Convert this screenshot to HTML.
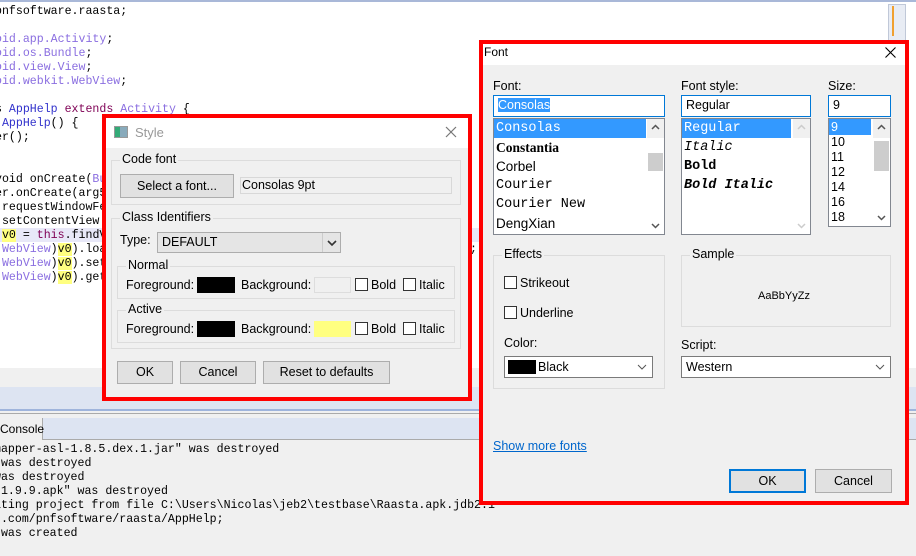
<!DOCTYPE html>
<html><head><meta charset="utf-8"><style>
*{box-sizing:border-box;margin:0;padding:0}
body{width:916px;height:556px;overflow:hidden;position:relative;background:#f0f0f0;font-family:"Liberation Sans",sans-serif;font-size:12px;color:#000}
.a{position:absolute}
.code{font-family:"Liberation Mono",monospace;font-size:11.6px;white-space:pre;line-height:14px}
.p{color:#8a6ee0}.k{color:#7f0055}.n{color:#3333cc}
.hl{background:#ffff80}
.grp{position:absolute;border:1px solid #dcdcdc}
.grp>.t{position:absolute;top:-9px;left:8px;background:#f0f0f0;padding:0 2px;font-size:12.5px}
.btn{position:absolute;background:#e1e1e1;border:1px solid #adadad;text-align:center;font-size:12.5px}
.cb{position:absolute;width:13px;height:13px;border:1px solid #333;background:#fff}
.sw{position:absolute;height:16px}
.lst{position:absolute;background:#fff;border:1px solid #828790;overflow:hidden}
.lst div{height:19px;line-height:19px;padding-left:2px;font-size:13.5px}
.sel{background:#3399ff;color:#fff}
.sb{position:absolute;top:0;right:0;width:17px;bottom:0;background:#f0f0f0}
.inp{position:absolute;background:#fff;border:1px solid #0078d7;font-size:12.5px;padding:2px 4px}
svg{position:absolute}
</style></head><body>
<div class="a" style="left:0;top:0;width:916px;height:368px;background:#fff;border-top:2px solid #a9b8d8"></div>
<div class="a" style="left:0;top:228px;width:900px;height:14px;background:#e8e8f8"></div>
<div class="a code" style="left:-5px;top:5px">pnfsoftware.raasta;

<span class="p">oid.app.Activity</span>;
<span class="p">oid.os.Bundle</span>;
<span class="p">oid.view.View</span>;
<span class="p">oid.webkit.WebView</span>;

s <span class="n">AppHelp</span> <span class="k">extends</span> <span class="p">Activity</span> {
 <span class="n">AppHelp</span>() {
er();


void onCreate(<span class="p">Bundle</span>
er.onCreate(arg5
 requestWindowFe
 setContentView
 <span class="hl">v0</span> = <span class="k">this</span>.findV
(<span class="p">WebView</span>)<span class="hl">v0</span>).loadD
(<span class="p">WebView</span>)<span class="hl">v0</span>).setBa
(<span class="p">WebView</span>)<span class="hl">v0</span>).getSe</div>
<div class="a code" style="left:470px;top:243px">;</div>
<div class="a" style="left:888px;top:4px;width:18px;height:380px;border:1px solid #c0c8d8;background:#e8ecf4"></div>
<div class="a" style="left:892px;top:6px;width:2px;height:30px;background:#f0a030"></div>
<div class="a" style="left:0;top:387px;width:916px;height:22px;background:#dde4f2"></div>
<div class="a" style="left:0;top:409px;width:916px;height:2px;background:#9fb4dc"></div>
<div class="a" style="left:0;top:413px;width:916px;height:1px;background:#aaa"></div>
<div class="a" style="left:0;top:418px;width:916px;height:22px;background:#dde4f2;border-bottom:1px solid #aaa"></div>
<div class="a" style="left:0;top:418px;width:43px;height:22px;background:#f0f0f0;border-right:1px solid #aaa;line-height:22px;font-size:12px">Console</div>
<div class="a code" style="left:-6px;top:443px">mapper-asl-1.8.5.dex.1.jar" was destroyed
 was destroyed
was destroyed
 1.9.9.apk" was destroyed
ating project from file C:\Users\Nicolas\jeb2\testbase\Raasta.apk.jdb2.1
 .com/pnfsoftware/raasta/AppHelp;
 was created</div>

<!-- Style dialog -->
<div class="a" style="left:102px;top:114px;width:370px;height:287px;border:4px solid #f00;background:#f0f0f0"></div>
<div class="a" style="left:106px;top:118px;width:362px;height:30px;background:#fff"></div>
<div class="a" style="left:114px;top:126px;width:14px;height:12px;border:1px solid #999;background:linear-gradient(90deg,#3a7 0 40%,#8ab 40%)"></div>
<div class="a" style="left:135px;top:125px;color:#999;font-size:13px">Style</div>
<svg style="left:445px;top:126px" width="12" height="12"><path d="M1 1L11 11M11 1L1 11" stroke="#777" stroke-width="1.2"/></svg>
<div class="grp" style="left:111px;top:160px;width:350px;height:45px"><span class="t">Code font</span></div>
<div class="btn" style="left:120px;top:174px;width:114px;height:24px;line-height:22px">Select a font...</div>
<div class="a" style="left:240px;top:177px;width:212px;height:17px;border:1px solid #d8d8d8;background:#f0f0f0;font-size:12.5px;padding-left:1px;line-height:15px">Consolas 9pt</div>
<div class="grp" style="left:111px;top:218px;width:350px;height:131px"><span class="t">Class Identifiers</span></div>
<div class="a" style="left:120px;top:233px;font-size:12.5px">Type:</div>
<div class="a" style="left:157px;top:232px;width:184px;height:21px;border:1px solid #adadad;background:#e5e5e5;padding:2px 4px;font-size:12.5px">DEFAULT</div>
<div class="a" style="left:322px;top:233px;width:1px;height:19px;background:#ccc"></div>
<svg style="left:327px;top:239px" width="10" height="8"><path d="M1 2L5 6L9 2" stroke="#333" stroke-width="1.6" fill="none"/></svg>
<div class="grp" style="left:117px;top:266px;width:338px;height:33px"><span class="t">Normal</span></div>
<div class="a" style="left:126px;top:278px;font-size:12.5px">Foreground:</div>
<div class="sw" style="left:197px;top:277px;width:38px;background:#000"></div>
<div class="a" style="left:241px;top:278px;font-size:12.5px">Background:</div>
<div class="sw" style="left:314px;top:277px;width:37px;background:#f0f0f0;border:1px solid #ddd"></div>
<div class="cb" style="left:355px;top:278px"></div><div class="a" style="left:371px;top:278px;font-size:12.5px">Bold</div>
<div class="cb" style="left:403px;top:278px"></div><div class="a" style="left:419px;top:278px;font-size:12.5px">Italic</div>
<div class="grp" style="left:117px;top:310px;width:338px;height:33px"><span class="t">Active</span></div>
<div class="a" style="left:126px;top:322px;font-size:12.5px">Foreground:</div>
<div class="sw" style="left:197px;top:321px;width:38px;background:#000"></div>
<div class="a" style="left:241px;top:322px;font-size:12.5px">Background:</div>
<div class="sw" style="left:314px;top:321px;width:37px;background:#ffff80"></div>
<div class="cb" style="left:355px;top:322px"></div><div class="a" style="left:371px;top:322px;font-size:12.5px">Bold</div>
<div class="cb" style="left:403px;top:322px"></div><div class="a" style="left:419px;top:322px;font-size:12.5px">Italic</div>
<div class="btn" style="left:117px;top:361px;width:56px;height:23px;line-height:21px">OK</div>
<div class="btn" style="left:180px;top:361px;width:76px;height:23px;line-height:21px">Cancel</div>
<div class="btn" style="left:263px;top:361px;width:127px;height:23px;line-height:21px">Reset to defaults</div>

<!-- Font dialog -->
<div class="a" style="left:479px;top:40px;width:430px;height:465px;border:4px solid #f00;background:#f0f0f0"></div>
<div class="a" style="left:483px;top:44px;width:422px;height:21px;background:#fff"></div>
<div class="a" style="left:484px;top:45px">Font</div>
<svg style="left:885px;top:47px" width="11" height="11"><path d="M0.5 0.5L10.5 10.5M10.5 0.5L0.5 10.5" stroke="#000" stroke-width="1.1"/></svg>
<div class="a" style="left:493px;top:79px;font-size:12.5px">Font:</div>
<div class="inp" style="left:493px;top:95px;width:172px;height:22px"><span style="background:#3399ff;color:#fff">Consolas</span></div>
<div class="lst" style="left:493px;top:118px;width:172px;height:117px">
<div class="sel" style="font-family:'Liberation Mono';width:152px">Consolas</div>
<div style="font-family:'Liberation Serif';font-weight:bold">Constantia</div>
<div>Corbel</div>
<div style="font-family:'Liberation Mono'">Courier</div>
<div style="font-family:'Liberation Mono'">Courier New</div>
<div>DengXian</div>
<div class="sb"><div style="position:absolute;top:34px;left:1px;width:15px;height:18px;background:#cdcdcd;padding:0"></div>
<svg style="left:4px;top:5px" width="9" height="6"><path d="M1 5L4.5 1.5L8 5" stroke="#555" stroke-width="1.5" fill="none"/></svg>
<svg style="left:4px;top:104px" width="9" height="6"><path d="M1 1L4.5 4.5L8 1" stroke="#555" stroke-width="1.5" fill="none"/></svg></div>
</div>
<div class="a" style="left:681px;top:79px;font-size:12.5px">Font style:</div>
<div class="inp" style="left:681px;top:95px;width:130px;height:22px">Regular</div>
<div class="lst" style="left:681px;top:118px;width:130px;height:117px">
<div class="sel" style="width:109px;font-family:'Liberation Mono'">Regular</div>
<div style="font-style:italic;font-family:'Liberation Mono'">Italic</div>
<div style="font-weight:bold;font-family:'Liberation Mono'">Bold</div>
<div style="font-weight:bold;font-style:italic;font-family:'Liberation Mono'">Bold Italic</div>
<div class="sb"><svg style="left:4px;top:5px" width="9" height="6"><path d="M1 5L4.5 1.5L8 5" stroke="#ccc" stroke-width="1.5" fill="none"/></svg>
<svg style="left:4px;top:104px" width="9" height="6"><path d="M1 1L4.5 4.5L8 1" stroke="#ccc" stroke-width="1.5" fill="none"/></svg></div>
</div>
<div class="a" style="left:828px;top:79px;font-size:12.5px">Size:</div>
<div class="inp" style="left:828px;top:95px;width:63px;height:22px">9</div>
<div class="lst" style="left:828px;top:118px;width:63px;height:109px">
<div class="sel" style="width:42px;height:16px;line-height:16px;font-size:12.5px">9</div>
<div style="height:15px;line-height:15px;font-size:12.5px">10</div><div style="height:15px;line-height:15px;font-size:12.5px">11</div><div style="height:15px;line-height:15px;font-size:12.5px">12</div><div style="height:15px;line-height:15px;font-size:12.5px">14</div><div style="height:15px;line-height:15px;font-size:12.5px">16</div><div style="height:15px;line-height:15px;font-size:12.5px">18</div>
<div class="sb"><div style="position:absolute;top:22px;left:1px;width:15px;height:30px;background:#cdcdcd;padding:0"></div>
<svg style="left:4px;top:5px" width="9" height="6"><path d="M1 5L4.5 1.5L8 5" stroke="#555" stroke-width="1.5" fill="none"/></svg>
<svg style="left:4px;top:96px" width="9" height="6"><path d="M1 1L4.5 4.5L8 1" stroke="#555" stroke-width="1.5" fill="none"/></svg></div>
</div>
<div class="grp" style="left:493px;top:255px;width:172px;height:134px"><span class="t">Effects</span></div>
<div class="cb" style="left:504px;top:276px"></div><div class="a" style="left:520px;top:276px;font-size:12.5px">Strikeout</div>
<div class="cb" style="left:504px;top:306px"></div><div class="a" style="left:520px;top:306px;font-size:12.5px">Underline</div>
<div class="a" style="left:504px;top:336px;font-size:12.5px">Color:</div>
<div class="a" style="left:504px;top:356px;width:149px;height:22px;border:1px solid #7a7a7a;background:#fff"></div>
<div class="a" style="left:508px;top:360px;width:28px;height:14px;background:#000"></div>
<div class="a" style="left:538px;top:360px;font-size:12.5px">Black</div>
<svg style="left:637px;top:364px" width="10" height="6"><path d="M1 1L5 5L9 1" stroke="#555" stroke-width="1" fill="none"/></svg>
<div class="grp" style="left:681px;top:255px;width:210px;height:72px"><span class="t">Sample</span></div>
<div class="a" style="left:758px;top:290px;font-size:11px">AaBbYyZz</div>
<div class="a" style="left:681px;top:338px;font-size:12.5px">Script:</div>
<div class="a" style="left:681px;top:356px;width:210px;height:22px;border:1px solid #7a7a7a;background:#fff;padding:3px 4px;font-size:12.5px">Western</div>
<svg style="left:875px;top:364px" width="10" height="6"><path d="M1 1L5 5L9 1" stroke="#555" stroke-width="1" fill="none"/></svg>
<div class="a" style="left:493px;top:439px;color:#0066cc;text-decoration:underline;font-size:12.5px">Show more fonts</div>
<div class="btn" style="left:729px;top:469px;width:77px;height:24px;line-height:20px;border:2px solid #0078d7">OK</div>
<div class="btn" style="left:815px;top:469px;width:77px;height:24px;line-height:22px">Cancel</div>
</body></html>
